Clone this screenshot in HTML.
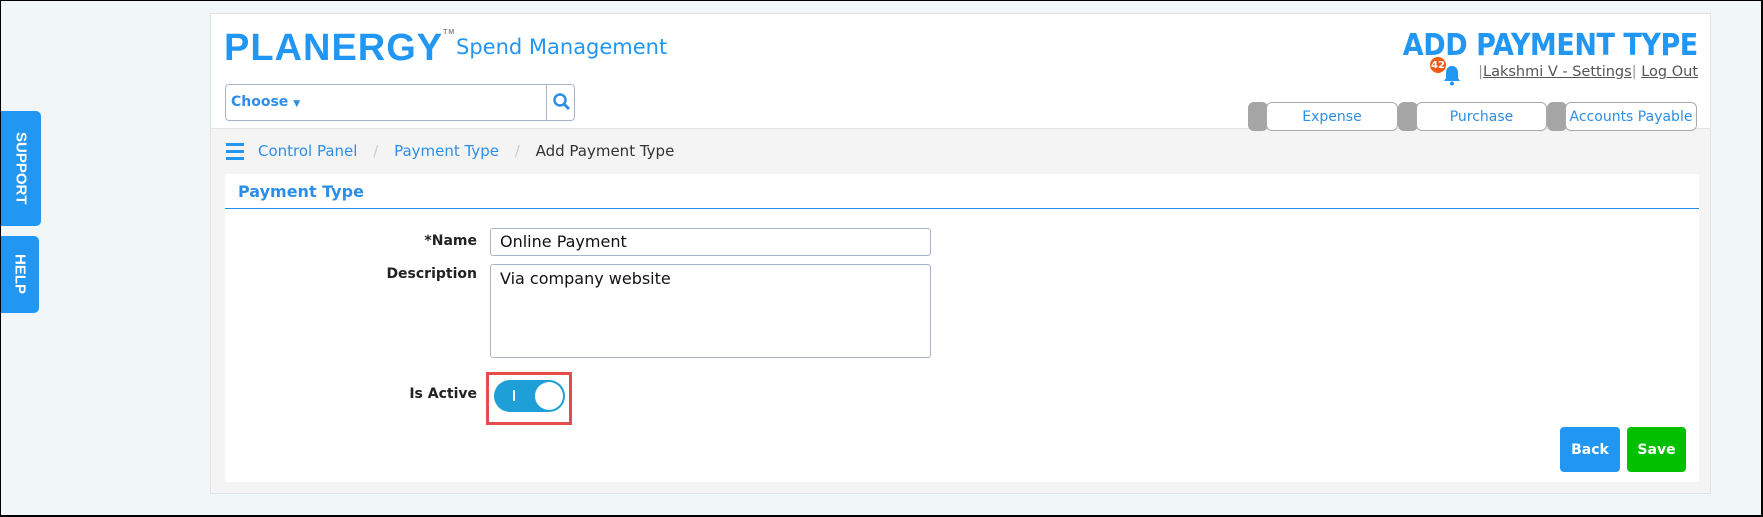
<!DOCTYPE html>
<html><head><meta charset="utf-8"><style>
*{box-sizing:border-box;margin:0;padding:0}
html,body{width:1763px;height:517px;overflow:hidden}
body{background:#f1f6f9;border:1px solid #000;border-right:2px solid #000;border-bottom:2px solid #000;position:relative;font-family:"DejaVu Sans","Liberation Sans",sans-serif}
.a{position:absolute}
.tab{background:#2196f3;color:#fff;font-weight:bold;font-size:15px;border-radius:0 5px 5px 0;writing-mode:vertical-rl;display:flex;align-items:center;justify-content:center;font-family:"Liberation Sans",sans-serif}
.cont{left:209px;top:12px;width:1501px;height:481px;background:#f4f4f4;border:1px solid #e2e2e2}
.hdr{left:0;top:0;width:1499px;height:115px;background:#fff;border-bottom:1px solid #e4e4e4}
.lbl{font-size:14px;font-weight:bold;color:#222;text-align:right;width:140px}
.inp{border:1px solid #aab4c8;border-radius:3px;background:#fff;font-size:16px;color:#111;padding:4px 9px}
.nav{height:29px;border:1px solid #aaa;border-radius:6px;background:#fff;color:#2d8ee6;font-size:14px;display:flex;align-items:center;justify-content:center;top:88px}
.gr{height:29px;background:#a5a5a5;border-radius:6px;top:88px;width:20px}
</style></head><body>
<div class="a tab" style="left:0;top:110px;width:40px;height:115px">SUPPORT</div>
<div class="a tab" style="left:0;top:235px;width:38px;height:77px">HELP</div>
<div class="a cont">
 <div class="a hdr">
  <div class="a" style="left:13px;top:13px;font-family:'Liberation Sans',sans-serif;font-size:38px;font-weight:bold;color:#2196f3;letter-spacing:1px">PLANERGY<sup style="font-size:7px;color:#888;vertical-align:top;position:relative;top:2px">TM</sup></div>
  <div class="a" style="left:245px;top:21px;font-size:21px;color:#2196f3;font-family:'DejaVu Sans',sans-serif">Spend Management</div>
  <div class="a" style="left:14px;top:70px;width:350px;height:37px;border:1px solid #aab4c8;border-radius:4px">
   <div class="a" style="left:5px;top:9px;font-size:14px;font-weight:bold;color:#2d8ee6">Choose <span style="font-size:9px">▼</span></div>
   <div class="a" style="left:320px;top:0;width:1px;height:35px;background:#aab4c8"></div>
   <svg class="a" style="left:326px;top:7px" width="20" height="20" viewBox="0 0 20 20"><circle cx="8" cy="8" r="5.5" fill="none" stroke="#2d8ee6" stroke-width="2.5"/><path d="M12 12l5 5" stroke="#2d8ee6" stroke-width="3"/></svg>
  </div>
  <div class="a" style="right:12px;top:14px;font-size:30px;font-weight:bold;color:#2196f3;font-family:'DejaVu Sans',sans-serif;letter-spacing:-0.5px;transform:scaleX(0.9);transform-origin:right">ADD PAYMENT TYPE</div>
  <div class="a" style="right:12px;top:50px;font-size:14.5px;color:#555;white-space:nowrap"><span style="color:#999">|</span><u>Lakshmi V - Settings</u><span style="color:#999">|</span> <u>Log Out</u></div>
  <svg class="a" style="left:1231px;top:50px" width="20" height="22" viewBox="0 0 20 22"><path d="M10 2c-4 0-6 3-6 7v5l-2 3h16l-2-3V9c0-4-2-7-6-7z" fill="#2196f3"/><circle cx="10" cy="19.5" r="2" fill="#2196f3"/></svg>
  <div class="a" style="left:1219px;top:43px;width:16px;height:16px;border-radius:50%;background:#f05a14;color:#fff;font-size:10px;font-weight:bold;display:flex;align-items:center;justify-content:center">42</div>
  <div class="a gr" style="left:1037px"></div><div class="a nav" style="left:1055px;width:132px">Expense</div>
  <div class="a gr" style="left:1187px"></div><div class="a nav" style="left:1205px;width:131px">Purchase</div>
  <div class="a gr" style="left:1336px"></div><div class="a nav" style="left:1354px;width:132px">Accounts Payable</div>
 </div>
 <div class="a" style="left:15px;top:129px;width:18px">
  <div style="height:3px;background:#2196f3;margin-bottom:4px"></div><div style="height:3px;background:#2196f3;margin-bottom:4px"></div><div style="height:3px;background:#2196f3"></div>
 </div>
 <div class="a" style="left:47px;top:128px;font-size:15px;color:#333;white-space:nowrap"><span style="color:#2d8ee6">Control Panel</span> <span style="color:#ccc;margin:0 11px">/</span> <span style="color:#2d8ee6">Payment Type</span> <span style="color:#ccc;margin:0 11px">/</span> Add Payment Type</div>
 <div class="a" style="left:14px;top:160px;width:1474px;height:308px;background:#fff">
  <div class="a" style="left:0;top:0;width:1474px;height:35px;border-bottom:1.5px solid #2d8ee6"></div>
  <div class="a" style="left:13px;top:8px;font-size:16px;font-weight:bold;color:#2d8ee6">Payment Type</div>
  <div class="a lbl" style="left:112px;top:59px">*Name</div>
  <div class="a inp" style="left:265px;top:54px;width:441px;height:28px;padding-top:3px">Online Payment</div>
  <div class="a lbl" style="left:112px;top:92px">Description</div>
  <div class="a inp" style="left:265px;top:90px;width:441px;height:94px">Via company website</div>
  <div class="a lbl" style="left:112px;top:212px">Is Active</div>
  <div class="a" style="left:261px;top:198px;width:86px;height:53px;border:3px solid #e74c4c"></div>
  <div class="a" style="left:269px;top:206px;width:71px;height:32px;border-radius:16px;background:#1f9fd8">
   <div class="a" style="left:19px;top:10px;width:2px;height:11px;background:#fff"></div>
   <div class="a" style="left:41px;top:2px;width:28px;height:28px;border-radius:50%;background:#fff"></div>
  </div>
  <div class="a" style="left:1335px;top:253px;width:60px;height:45px;border-radius:4px;background:#2196f3;color:#fff;font-weight:bold;font-size:14px;display:flex;align-items:center;justify-content:center">Back</div>
  <div class="a" style="left:1402px;top:253px;width:59px;height:45px;border-radius:4px;background:#00c000;color:#fff;font-weight:bold;font-size:14px;display:flex;align-items:center;justify-content:center">Save</div>
 </div>
</div>
</body></html>
